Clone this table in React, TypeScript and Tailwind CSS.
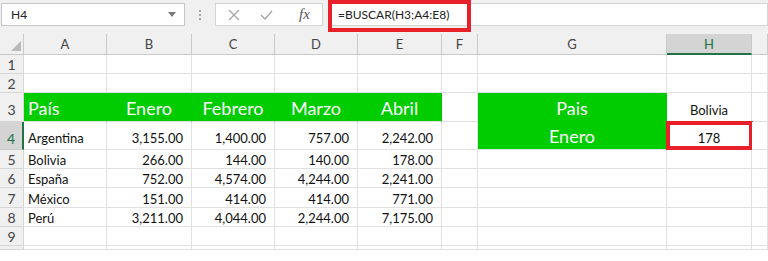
import React from 'react';

type Cell = { v?: string; al?: 'l' | 'c' | 'r'; big?: boolean; green?: boolean; joined?: boolean; red?: boolean };
type Row = { n: string; pb: string; npb: string; cells: Cell[] };

const COLS = ['A', 'B', 'C', 'D', 'E', 'F', 'G', 'H', ''];

const g = (v: string, al: 'l' | 'c' = 'c'): Cell => ({ v, al, big: true, green: true });
const r = (v: string): Cell => ({ v, al: 'r' });
const l = (v: string): Cell => ({ v, al: 'l' });
const empty = (n: number): Cell[] => Array.from({ length: n }, () => ({}));

const dataRow = (n: string, name: string, nums: string[]): Row => ({
  n,
  pb: 'pb-px',
  npb: 'pb-px',
  cells: [l(name), ...nums.map(r), ...empty(4)],
});

const ROWS: Row[] = [
  { n: '1', pb: 'pb-px', npb: 'pb-px', cells: empty(9) },
  { n: '2', pb: 'pb-px', npb: 'pb-px', cells: empty(9) },
  {
    n: '3',
    pb: 'pb-[4px]',
    npb: 'pb-[4px]',
    cells: [
      g('País', 'l'),
      g('Enero'),
      g('Febrero'),
      g('Marzo'),
      g('Abril'),
      {},
      { ...g('Pais'), joined: true },
      { v: 'Bolivia', al: 'c' },
      {},
    ],
  },
  {
    n: '4',
    pb: 'pb-[4px]',
    npb: 'pb-[3px]',
    cells: [l('Argentina'), r('3,155.00'), r('1,400.00'), r('757.00'), r('2,242.00'), {}, g('Enero'), { v: '178', al: 'c', red: true }, {}],
  },
  dataRow('5', 'Bolivia', ['266.00', '144.00', '140.00', '178.00']),
  dataRow('6', 'España', ['752.00', '4,574.00', '4,244.00', '2,241.00']),
  dataRow('7', 'México', ['151.00', '414.00', '414.00', '771.00']),
  dataRow('8', 'Perú', ['3,211.00', '4,044.00', '2,244.00', '7,175.00']),
  { n: '9', pb: 'pb-px', npb: 'pb-px', cells: empty(9) },
  { n: '', pb: 'pb-0', npb: 'pb-0', cells: empty(9) },
];

function SheetCell({ c, pb }: { c: Cell; pb: string }) {
  const justify = c.al === 'r' ? 'justify-end pr-[8px]' : c.al === 'c' ? 'justify-center' : 'justify-start pl-[4px]';
  let look = 'bg-white text-[#111] text-[13px] border-[#e1e1e1]';
  if (c.green) {
    // filled cells hide their gridlines; G3 runs straight into G4
    look = c.joined
      ? 'bg-[#00cc00] text-white text-[18px] border-[#00cc00]'
      : 'bg-[#00cc00] text-white text-[18px] border-r-[#00cc00] border-b-[#e1e1e1]';
  }
  return (
    <div className={`relative flex items-end overflow-visible whitespace-nowrap border-r border-b leading-none ${justify} ${look} ${pb}`}>
      {c.v}
      {c.red && <div className="absolute -left-px -top-px -right-[2px] -bottom-px border-[4px] border-[#e8202a]" />}
    </div>
  );
}

function Toolbar() {
  return (
    <div className="flex h-[34px] bg-[#f0f0f0] pl-px">
      {/* name box */}
      <div className="mt-[3px] flex h-[23px] w-[184px] items-center justify-between border border-[#c6c6c6] bg-white pl-[9px] pr-[8px] text-[12px] text-[#222]">
        <span>H4</span>
        <svg width="8" height="5" viewBox="0 0 8 5">
          <path d="M0 0h8L4 5z" fill="#7a7a7a" />
        </svg>
      </div>
      {/* grip */}
      <div className="flex w-[30px] flex-col items-center justify-center gap-[2px] pb-[4px]">
        <span className="h-[2px] w-[2px] bg-[#a8a8a8]" />
        <span className="h-[2px] w-[2px] bg-[#a8a8a8]" />
        <span className="h-[2px] w-[2px] bg-[#a8a8a8]" />
      </div>
      {/* cancel / enter / fx */}
      <div className="mt-[3px] flex h-[23px] w-[108px] items-center border border-[#d4d4d4] bg-white">
        <svg className="ml-[12px]" width="12" height="12" viewBox="0 0 12 12">
          <path d="M1 1l10 10M11 1L1 11" stroke="#a3a3a3" strokeWidth="1.2" />
        </svg>
        <svg className="ml-[20px]" width="13" height="10" viewBox="0 0 13 10">
          <path d="M1 5l4 4 7-8" stroke="#a3a3a3" strokeWidth="1.2" fill="none" />
        </svg>
        <span className="ml-[26px] font-['Liberation_Serif',serif] text-[15px] italic leading-none text-[#555]">fx</span>
      </div>
      {/* formula */}
      <div className="relative ml-[5px] mt-[3px] flex h-[23px] flex-1 items-center border border-[#d4d4d4] bg-white pl-[9px] text-[12px] text-[#222]">
        =BUSCAR(H3;A4:E8)
        <div className="absolute -left-px -top-[4px] h-[32px] w-[143px] border-[4px] border-[#e8202a]" />
      </div>
    </div>
  );
}

export default function App() {
  return (
    <div className="h-[261px] w-[768px] overflow-hidden bg-white font-['Lato',sans-serif]">
      <Toolbar />
      <div className="grid grid-cols-[24px_83px_85px_83px_83px_84px_36px_189px_85px_16px] grid-rows-[21px_19px_19px_29px_28px_19px_19px_20px_19px_19px_4px]">
        {/* column headers */}
        <div className="relative border-r border-b border-[#c9c9c9] bg-[#f0f0f0]">
          <svg className="absolute right-[2px] bottom-[3px]" width="10" height="10" viewBox="0 0 10 10">
            <path d="M10 0v10H0z" fill="#b8b8b8" />
          </svg>
        </div>
        {COLS.map((c, i) =>
          c === 'H' ? (
            <div key={i} className="flex items-end justify-center border-r border-b-2 border-r-[#c9c9c9] border-b-[#217346] bg-[#d4d4d4] pb-[2px] text-[13px] leading-none text-[#217346]">
              {c}
            </div>
          ) : (
            <div key={i} className="flex items-end justify-center border-r border-b border-[#c9c9c9] bg-[#f0f0f0] pb-[3px] text-[13px] leading-none text-[#444]">
              {c}
            </div>
          )
        )}
        {/* body */}
        {ROWS.map((row, ri) => (
          <React.Fragment key={ri}>
            {row.n === '4' ? (
              <div className={`flex items-end justify-center border-r-2 border-b border-r-[#217346] border-b-[#c9c9c9] bg-[#d4d4d4] text-[14px] leading-none text-[#217346] ${row.npb}`}>
                {row.n}
              </div>
            ) : (
              <div className={`flex items-end justify-center border-r border-b border-[#d6d6d6] bg-[#f0f0f0] text-[14px] leading-none text-[#444] ${row.npb}`}>
                {row.n}
              </div>
            )}
            {row.cells.map((c, ci) => (
              <SheetCell key={ci} c={c} pb={row.pb} />
            ))}
          </React.Fragment>
        ))}
      </div>
    </div>
  );
}
